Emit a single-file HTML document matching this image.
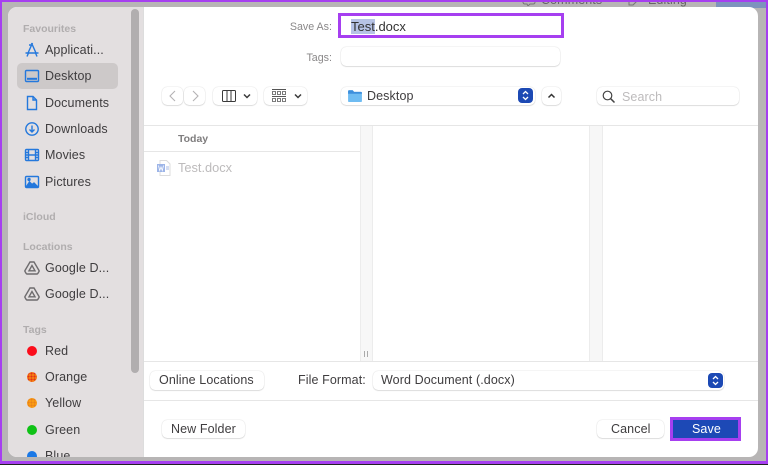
<!DOCTYPE html>
<html><head><meta charset="utf-8"><style>
html,body{margin:0;padding:0}
body{width:768px;height:465px;overflow:hidden;position:relative;background:#b7b5b5;font-family:"Liberation Sans",sans-serif;color:#3f3d3f}
div,span,svg{position:absolute;box-sizing:border-box}
.t{white-space:nowrap;font-size:12.5px;line-height:16px;letter-spacing:.1px}
.l{white-space:nowrap;font-size:10.7px;line-height:14px;color:#8a8889;text-align:right;width:60px}
.h{white-space:nowrap;font-size:10.5px;line-height:14px;font-weight:bold;color:#b0adae}
.b{background:#fff;border-radius:5px;box-shadow:0 0 1px rgba(0,0,0,.25),0 1px 1px rgba(0,0,0,.1)}
.line{background:#e6e6e6;height:1px}
.dot{width:10px;height:10px;border-radius:50%}
.ic{left:24px;width:16px;height:16px;fill:none;stroke:#2478dc;stroke-width:1.4}
.up{background:#1c49b4;border-radius:4px}
</style></head><body>
<div style="left:716px;top:2px;width:50px;height:6px;background:#7d93bd"></div>
<div class="t" style="left:541px;top:-8px;color:#666">Comments</div>
<div class="t" style="left:648px;top:-8px;color:#666">Editing</div>
<svg style="left:522px;top:0;width:14px;height:6px" viewBox="0 0 14 6" fill="none" stroke="#777"><path d="M1 0V2Q1 4 3 4H5L6 6L8 4H11Q13 4 13 2V0"/></svg>
<svg style="left:628px;top:0;width:12px;height:6px" viewBox="0 0 12 6" fill="none" stroke="#777"><path d="M1 1V5H5L10 0"/></svg>
<!-- purple frame -->
<div style="left:0;top:0;width:768px;height:2px;background:#a63ff0"></div>
<div style="left:0;top:0;width:2px;height:464px;background:#a63ff0"></div>
<div style="left:766px;top:0;width:2px;height:464px;background:#a63ff0"></div>
<div style="left:0;top:461px;width:768px;height:3px;background:#a63ff0"></div>
<div style="left:0;top:464px;width:768px;height:1px;background:#222"></div>

<!-- dialog -->
<div style="left:8px;top:7px;width:750px;height:450px;background:#fff;border-radius:9px;overflow:hidden">
 <div style="left:0;top:0;width:135px;height:450px;background:#e3dfe0"></div>
 <div style="left:123px;top:2px;width:8px;height:364px;background:#b1aeaf;border-radius:4px"></div>
</div>

<!-- sidebar -->
<div style="left:17px;top:63px;width:101px;height:26px;background:#cdc9c9;border-radius:5px"></div>
<div class="h" style="left:23px;top:22px">Favourites</div>
<svg class="ic" style="top:42px" viewBox="0 0 16 16"><path d="M8.5 1 L4 11 M7.5 1 L12 11 M5 3 H8 M1.5 11 H14.5 M3 14.5 L4.5 11 M13 14.5 L11.5 11"/></svg>
<div class="t" style="left:45px;top:42px">Applicati...</div>
<svg class="ic" style="top:68px" viewBox="0 0 16 16"><rect x="1.5" y="2.5" width="13" height="11" rx="1"/><path d="M3 10.8H13" stroke-width="2"/></svg>
<div class="t" style="left:45px;top:68px">Desktop</div>
<svg class="ic" style="top:95px" viewBox="0 0 16 16"><path d="M3.5 1.5H9L12.5 5V14.5H3.5Z M9 1.5V5H12.5"/></svg>
<div class="t" style="left:45px;top:95px">Documents</div>
<svg class="ic" style="top:121px" viewBox="0 0 16 16"><circle cx="8" cy="8" r="6.2"/><path d="M8 4.5V11 M5.5 8.5L8 11L10.5 8.5"/></svg>
<div class="t" style="left:45px;top:121px">Downloads</div>
<svg class="ic" style="top:147px" viewBox="0 0 16 16"><rect x="1.5" y="2.5" width="13" height="11" rx="1"/><path d="M4.5 2.5V13.5 M11.5 2.5V13.5 M4.5 8H11.5 M1.5 5.5H4.5 M1.5 8H4.5 M1.5 10.5H4.5 M11.5 5.5H14.5 M11.5 8H14.5 M11.5 10.5H14.5"/></svg>
<div class="t" style="left:45px;top:147px">Movies</div>
<svg class="ic" style="top:174px" viewBox="0 0 16 16"><rect x="1.5" y="2.5" width="13" height="11" rx="1"/><path d="M2.5 12.5L5.5 8L8 10.5L10 9L13.5 12.5Z" fill="#2478dc"/><circle cx="5" cy="5.5" r="1" fill="#2478dc"/></svg>
<div class="t" style="left:45px;top:174px">Pictures</div>
<div class="h" style="left:23px;top:210px">iCloud</div>
<div class="h" style="left:23px;top:240px">Locations</div>
<svg class="ic" style="top:260px;stroke:#6e6c6e" viewBox="0 0 16 16"><path d="M6 2H10L15 10.5Q15.3 11 15 11.5L13.8 13.5Q13.5 14 13 14H3Q2.500 14 2.200 13.500L1 11.500Q.7 11 1 10.500Z M8 5.500L5 10.800H11Z"/></svg>
<div class="t" style="left:45px;top:260px">Google D...</div>
<svg class="ic" style="top:286px;stroke:#6e6c6e" viewBox="0 0 16 16"><path d="M6 2H10L15 10.5Q15.3 11 15 11.5L13.8 13.5Q13.5 14 13 14H3Q2.500 14 2.200 13.500L1 11.500Q.7 11 1 10.500Z M8 5.500L5 10.800H11Z"/></svg>
<div class="t" style="left:45px;top:286px">Google D...</div>
<div class="h" style="left:23px;top:323px">Tags</div>
<div class="dot" style="left:27px;top:346px;background:#fb0d1b"></div>
<div class="t" style="left:45px;top:343px">Red</div>
<div class="dot" style="left:27px;top:372px;background:#f47a12 radial-gradient(circle,#e0301a 0.8px,transparent 1px) 0 0/3px 3px"></div>
<div class="t" style="left:45px;top:369px">Orange</div>
<div class="dot" style="left:27px;top:398px;background:#f99a12 radial-gradient(circle,#e8801a 0.8px,transparent 1px) 0 0/3px 3px"></div>
<div class="t" style="left:45px;top:395px">Yellow</div>
<div class="dot" style="left:27px;top:425px;background:#0fc216"></div>
<div class="t" style="left:45px;top:422px">Green</div>
<div style="left:8px;top:440px;width:135px;height:17px;overflow:hidden">
 <div class="dot" style="left:19px;top:11px;background:#1a78e6"></div>
 <div class="t" style="left:37px;top:8px">Blue</div>
</div>

<!-- sidebar separator -->
<div style="left:143px;top:7px;width:1px;height:450px;background:#ddd"></div>

<!-- save as -->
<div class="l" style="left:272px;top:20px">Save As:</div>
<div style="left:338px;top:13px;width:226px;height:25px;border:3px solid #a63ff0;background:#fff"></div>
<div style="left:351px;top:19px;width:24px;height:15px;background:#b6c3e6"></div>
<div class="t" style="left:351px;top:19px;font-size:13px;letter-spacing:0;color:#333">Test.docx</div>
<div class="l" style="left:272px;top:51px">Tags:</div>
<div class="b" style="left:341px;top:47px;width:219px;height:19px"></div>

<!-- toolbar -->
<div class="b" style="left:162px;top:87px;width:21px;height:18px"></div>
<div class="b" style="left:184px;top:87px;width:21px;height:18px"></div>
<svg style="left:162px;top:87px;width:44px;height:18px" viewBox="0 0 44 18" fill="none" stroke="#b5b3b4" stroke-width="1.1"><path d="M13 4L8 9L13 14"/><path d="M31 4L36 9L31 14"/></svg>
<div class="b" style="left:213px;top:87px;width:44px;height:18px"></div>
<svg style="left:213px;top:87px;width:44px;height:18px" viewBox="0 0 44 18" fill="none" stroke="#3a3a3a"><rect x="9.500" y="3.500" width="13" height="11" rx="1"/><path d="M14 3.500V14.500M18 3.500V14.500"/><path d="M31 7.500L34 10.500L37 7.500" stroke-width="1.500"/></svg>
<div class="b" style="left:264px;top:87px;width:43px;height:18px"></div>
<svg style="left:264px;top:87px;width:43px;height:18px" viewBox="0 0 43 18" fill="none" stroke="#555"><path d="M8 2.500H22M8 9.500H22" /><path d="M8.500 4.500h3v3h-3zM13.500 4.500h3v3h-3zM18.500 4.500h3v3h-3zM8.500 11.500h3v3h-3zM13.500 11.500h3v3h-3zM18.500 11.500h3v3h-3z" stroke-width=".8"/><path d="M31 7.500L34 10.500L37 7.500" stroke="#3a3a3a" stroke-width="1.500"/></svg>

<div class="b" style="left:341px;top:87px;width:194px;height:18px"></div>
<svg style="left:348px;top:90px;width:14px;height:12px" viewBox="0 0 15 13"><path d="M0 1.500Q0 .3 1 .3H5L6.500 2H14Q15 2 15 3V12Q15 13 14 13H1Q0 13 0 12Z" fill="#6fbcf2"/><path d="M0 1.500Q0 .3 1 .3H5L6.500 2H14Q15 2 15 3V4H0Z" fill="#3d8fdc"/></svg>
<div class="t" style="left:367px;top:88px">Desktop</div>
<div class="up" style="left:518px;top:88px;width:15px;height:15px"></div>
<svg style="left:518px;top:88px;width:15px;height:15px" viewBox="0 0 15 15" fill="none" stroke="#fff" stroke-width="1.300"><path d="M5 6L7.500 3.500L10 6M5 9L7.500 11.500L10 9"/></svg>
<div class="b" style="left:542px;top:87px;width:19px;height:18px"></div>
<svg style="left:542px;top:87px;width:19px;height:18px" viewBox="0 0 19 18" fill="none" stroke="#333" stroke-width="1.500"><path d="M6.500 10.500L9.500 7.500L12.500 10.500"/></svg>
<div class="b" style="left:597px;top:87px;width:142px;height:18px"></div>
<svg style="left:601px;top:89px;width:15px;height:15px" viewBox="0 0 15 15" fill="none" stroke="#444" stroke-width="1.200"><circle cx="6.500" cy="6.500" r="4.300"/><path d="M9.700 9.700L13.500 13.500" stroke-width="1.500"/></svg>
<div class="t" style="left:622px;top:89px;color:#bdbbbc">Search</div>

<!-- browser -->
<div class="line" style="left:144px;top:125px;width:614px"></div>
<div class="line" style="left:144px;top:151px;width:216px"></div>
<div class="h" style="left:178px;top:132px;color:#7f7d7e">Today</div>
<svg style="left:157px;top:160px;width:14px;height:16px" viewBox="0 0 14 16"><path d="M3 .5H9.500L13 4V15.500H3Z" fill="#fff" stroke="#dcdcdc"/><rect x="0" y="4" width="8" height="8" fill="#9db5e8"/><path d="M9 7H12M9 9H12" stroke="#a8bbe6"/><path d="M1.500 5.500L2.700 10.500L4 7L5.300 10.500L6.500 5.500" fill="none" stroke="#fff" stroke-width=".8"/></svg>
<div class="t" style="left:178px;top:160px;color:#bdbbbc;font-size:12.8px;letter-spacing:0">Test.docx</div>
<div style="left:360px;top:126px;width:13px;height:235px;background:#f7f7f7;border-left:1px solid #ececec;border-right:1px solid #ececec"></div>
<div style="left:589px;top:126px;width:14px;height:235px;background:#f7f7f7;border-left:1px solid #ececec;border-right:1px solid #ececec"></div>
<div style="left:364px;top:351px;width:1px;height:6px;background:#aaa"></div>
<div style="left:367px;top:351px;width:1px;height:6px;background:#aaa"></div>
<div class="line" style="left:144px;top:361px;width:614px"></div>

<!-- format row -->
<div class="b" style="left:150px;top:371px;width:114px;height:19px"></div>
<div class="t" style="left:159px;top:372px">Online Locations</div>
<div class="t" style="left:298px;top:372px">File Format:</div>
<div class="b" style="left:373px;top:371px;width:351px;height:19px"></div>
<div class="t" style="left:381px;top:372px">Word Document (.docx)</div>
<div class="up" style="left:708px;top:373px;width:15px;height:15px"></div>
<svg style="left:708px;top:373px;width:15px;height:15px" viewBox="0 0 15 15" fill="none" stroke="#fff" stroke-width="1.300"><path d="M5 6L7.500 3.500L10 6M5 9L7.500 11.500L10 9"/></svg>
<div class="line" style="left:144px;top:400px;width:614px"></div>

<!-- bottom row -->
<div class="b" style="left:162px;top:420px;width:83px;height:18px"></div>
<div class="t" style="left:171px;top:421px">New Folder</div>
<div class="b" style="left:597px;top:420px;width:67px;height:18px"></div>
<div class="t" style="left:611px;top:421px">Cancel</div>
<div style="left:670px;top:417px;width:71px;height:24px;background:#1d49b6;border:3px solid #a63ff0"></div>
<div class="t" style="left:692px;top:421px;color:#fff">Save</div>
</body></html>
